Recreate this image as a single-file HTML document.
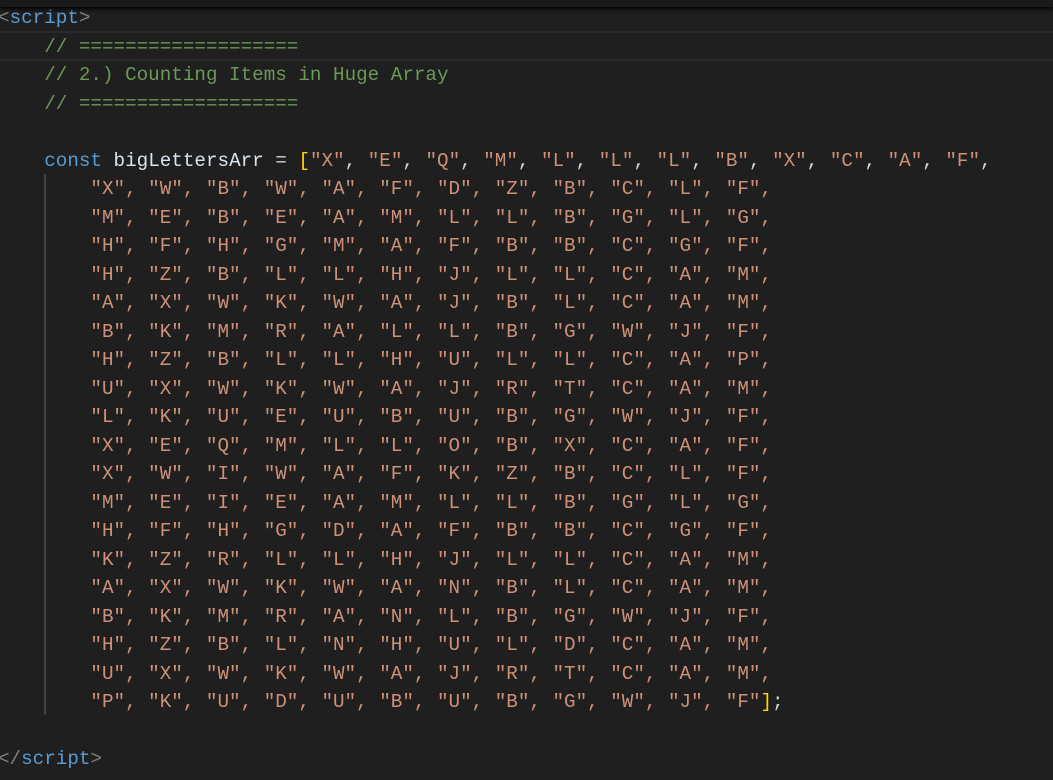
<!DOCTYPE html>
<html><head><meta charset="utf-8"><style>
html,body{margin:0;padding:0;background:#1f1f1f;width:1053px;height:780px;overflow:hidden;}
#code{position:absolute;left:-2px;top:-24.25px;font-family:"Liberation Mono",monospace;font-size:19.25px;line-height:28.5px;white-space:pre;color:#d4d4d4;}
.c{color:#6a9955}.k{color:#569cd6}.v{color:#d8e4ee}.s{color:#ce9178}.t{color:#808080}.b{color:#ffd700}
#top{position:absolute;left:0;top:0;width:1053px;height:7px;background:#1a1a1a;box-shadow:0 2px 4px #000;z-index:2}
#hl{position:absolute;left:0;top:31px;width:1053px;height:26px;border-top:2px solid #2a2a2a;border-bottom:2px solid #2a2a2a;}
#guide{position:absolute;left:44px;top:174px;width:2px;height:541px;background:#404040;}
</style></head><body>
<div id="hl"></div>
<div id="guide"></div>
<div id="code"><span class="t">  &lt;p&gt;</span>
<span class="t">&lt;</span><span class="k">script</span><span class="t">&gt;</span>
    <span class="c">// ===================</span>
    <span class="c">// 2.) Counting Items in Huge Array</span>
    <span class="c">// ===================</span>

    <span class="k">const</span> <span class="v">bigLettersArr</span> = <span class="b">[</span><span class="s">"X"</span>, <span class="s">"E"</span>, <span class="s">"Q"</span>, <span class="s">"M"</span>, <span class="s">"L"</span>, <span class="s">"L"</span>, <span class="s">"L"</span>, <span class="s">"B"</span>, <span class="s">"X"</span>, <span class="s">"C"</span>, <span class="s">"A"</span>, <span class="s">"F"</span>,
<span class="s">        "X", "W", "B", "W", "A", "F", "D", "Z", "B", "C", "L", "F",</span>
<span class="s">        "M", "E", "B", "E", "A", "M", "L", "L", "B", "G", "L", "G",</span>
<span class="s">        "H", "F", "H", "G", "M", "A", "F", "B", "B", "C", "G", "F",</span>
<span class="s">        "H", "Z", "B", "L", "L", "H", "J", "L", "L", "C", "A", "M",</span>
<span class="s">        "A", "X", "W", "K", "W", "A", "J", "B", "L", "C", "A", "M",</span>
<span class="s">        "B", "K", "M", "R", "A", "L", "L", "B", "G", "W", "J", "F",</span>
<span class="s">        "H", "Z", "B", "L", "L", "H", "U", "L", "L", "C", "A", "P",</span>
<span class="s">        "U", "X", "W", "K", "W", "A", "J", "R", "T", "C", "A", "M",</span>
<span class="s">        "L", "K", "U", "E", "U", "B", "U", "B", "G", "W", "J", "F",</span>
<span class="s">        "X", "E", "Q", "M", "L", "L", "O", "B", "X", "C", "A", "F",</span>
<span class="s">        "X", "W", "I", "W", "A", "F", "K", "Z", "B", "C", "L", "F",</span>
<span class="s">        "M", "E", "I", "E", "A", "M", "L", "L", "B", "G", "L", "G",</span>
<span class="s">        "H", "F", "H", "G", "D", "A", "F", "B", "B", "C", "G", "F",</span>
<span class="s">        "K", "Z", "R", "L", "L", "H", "J", "L", "L", "C", "A", "M",</span>
<span class="s">        "A", "X", "W", "K", "W", "A", "N", "B", "L", "C", "A", "M",</span>
<span class="s">        "B", "K", "M", "R", "A", "N", "L", "B", "G", "W", "J", "F",</span>
<span class="s">        "H", "Z", "B", "L", "N", "H", "U", "L", "D", "C", "A", "M",</span>
<span class="s">        "U", "X", "W", "K", "W", "A", "J", "R", "T", "C", "A", "M",</span>
<span class="s">        "P", "K", "U", "D", "U", "B", "U", "B", "G", "W", "J", "F"</span><span class="b">]</span>;

<span class="t">&lt;/</span><span class="k">script</span><span class="t">&gt;</span></div>
<div id="top"></div>
</body></html>
